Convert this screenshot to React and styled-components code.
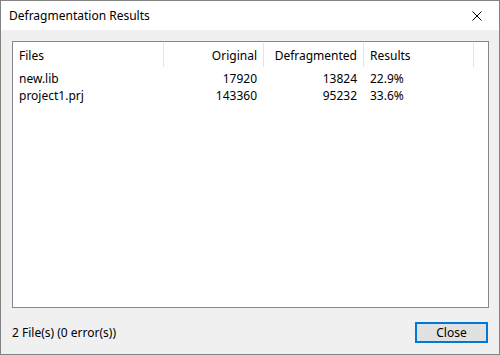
import React from "react";
import styled, { createGlobalStyle } from "styled-components";

const Global = createGlobalStyle`
  html, body { margin: 0; padding: 0; background: #f0f0f0; }
  body { font-family: "Segoe UI", "Noto Sans", "Liberation Sans", sans-serif; font-size: 12px; color: #000; }
`;

const Window = styled.div`
  box-sizing: border-box;
  width: 500px;
  height: 355px;
  border: 1px solid #838383;
  background: #f0f0f0;
  display: flex;
  flex-direction: column;
`;

const TitleBar = styled.div`
  height: 29px;
  background: #fff;
  display: flex;
  align-items: center;
  justify-content: space-between;
  padding-left: 8px;
  flex-shrink: 0;
`;

const Title = styled.div`
  font-size: 12px;
  color: #000;
  padding-bottom: 1px;
`;

const CloseX = styled.div`
  width: 46px;
  height: 29px;
  display: flex;
  align-items: center;
  justify-content: center;
  margin-right: -1px;
`;

const Body = styled.div`
  flex: 1;
  display: flex;
  flex-direction: column;
  padding: 11px 10px 0 11px;
`;

const ListBox = styled.div`
  box-sizing: border-box;
  height: 267px;
  border: 1px solid #828790;
  background: #fff;
  display: flex;
  flex-direction: column;
`;

const cols = "151px 100px 100px 110px 1fr";

const HeaderRow = styled.div`
  display: grid;
  grid-template-columns: ${cols};
  height: 27px;
  padding-bottom: 1px;
`;

const HeaderCell = styled.div`
  display: flex;
  align-items: center;
  justify-content: ${(p) => (p.$right ? "flex-end" : "flex-start")};
  padding: 0 ${(p) => (p.$right ? "6px" : "0")} 0 ${(p) => (p.$right ? "0" : "6px")};
  border-right: ${(p) => (p.$last ? "none" : "1px solid #e5e5e5")};
  margin: 1px 0 2px;
`;

const Row = styled.div`
  display: grid;
  grid-template-columns: ${cols};
  height: 17px;
`;

const Cell = styled.div`
  display: flex;
  align-items: center;
  justify-content: ${(p) => (p.$right ? "flex-end" : "flex-start")};
  padding: 0 ${(p) => (p.$right ? "7px" : "0")} 0 ${(p) => (p.$right ? "0" : "6px")};
  white-space: nowrap;
`;

const Footer = styled.div`
  display: flex;
  align-items: center;
  justify-content: space-between;
  margin-top: 14px;
`;

const Status = styled.div`
  margin-top: 0;
`;

const Button = styled.button`
  box-sizing: border-box;
  width: 73px;
  height: 21px;
  border: 2px solid #0078d7;
  background: #e1e1e1;
  font-family: inherit;
  font-size: 12px;
  color: #000;
  padding: 0 0 1px;
  margin: 0 1px 0 0;
`;

const data = [
  { file: "new.lib", orig: "17920", defrag: "13824", res: "22.9%" },
  { file: "project1.prj", orig: "143360", defrag: "95232", res: "33.6%" },
];

export default function App() {
  return (
    <>
      <Global />
      <Window>
        <TitleBar>
          <Title>Defragmentation Results</Title>
          <CloseX>
            <svg width="10" height="10" viewBox="0 0 10 10">
              <path d="M0.5 0.5 L9.5 9.5 M9.5 0.5 L0.5 9.5" stroke="#000" strokeWidth="1" fill="none" />
            </svg>
          </CloseX>
        </TitleBar>
        <Body>
          <ListBox>
            <HeaderRow>
              <HeaderCell>Files</HeaderCell>
              <HeaderCell $right>Original</HeaderCell>
              <HeaderCell $right>Defragmented</HeaderCell>
              <HeaderCell>Results</HeaderCell>
              <HeaderCell $last />
            </HeaderRow>
            {data.map((d) => (
              <Row key={d.file}>
                <Cell>{d.file}</Cell>
                <Cell $right>{d.orig}</Cell>
                <Cell $right>{d.defrag}</Cell>
                <Cell>{d.res}</Cell>
                <Cell />
              </Row>
            ))}
          </ListBox>
          <Footer>
            <Status>2 File(s) (0 error(s))</Status>
            <Button>Close</Button>
          </Footer>
        </Body>
      </Window>
    </>
  );
}
